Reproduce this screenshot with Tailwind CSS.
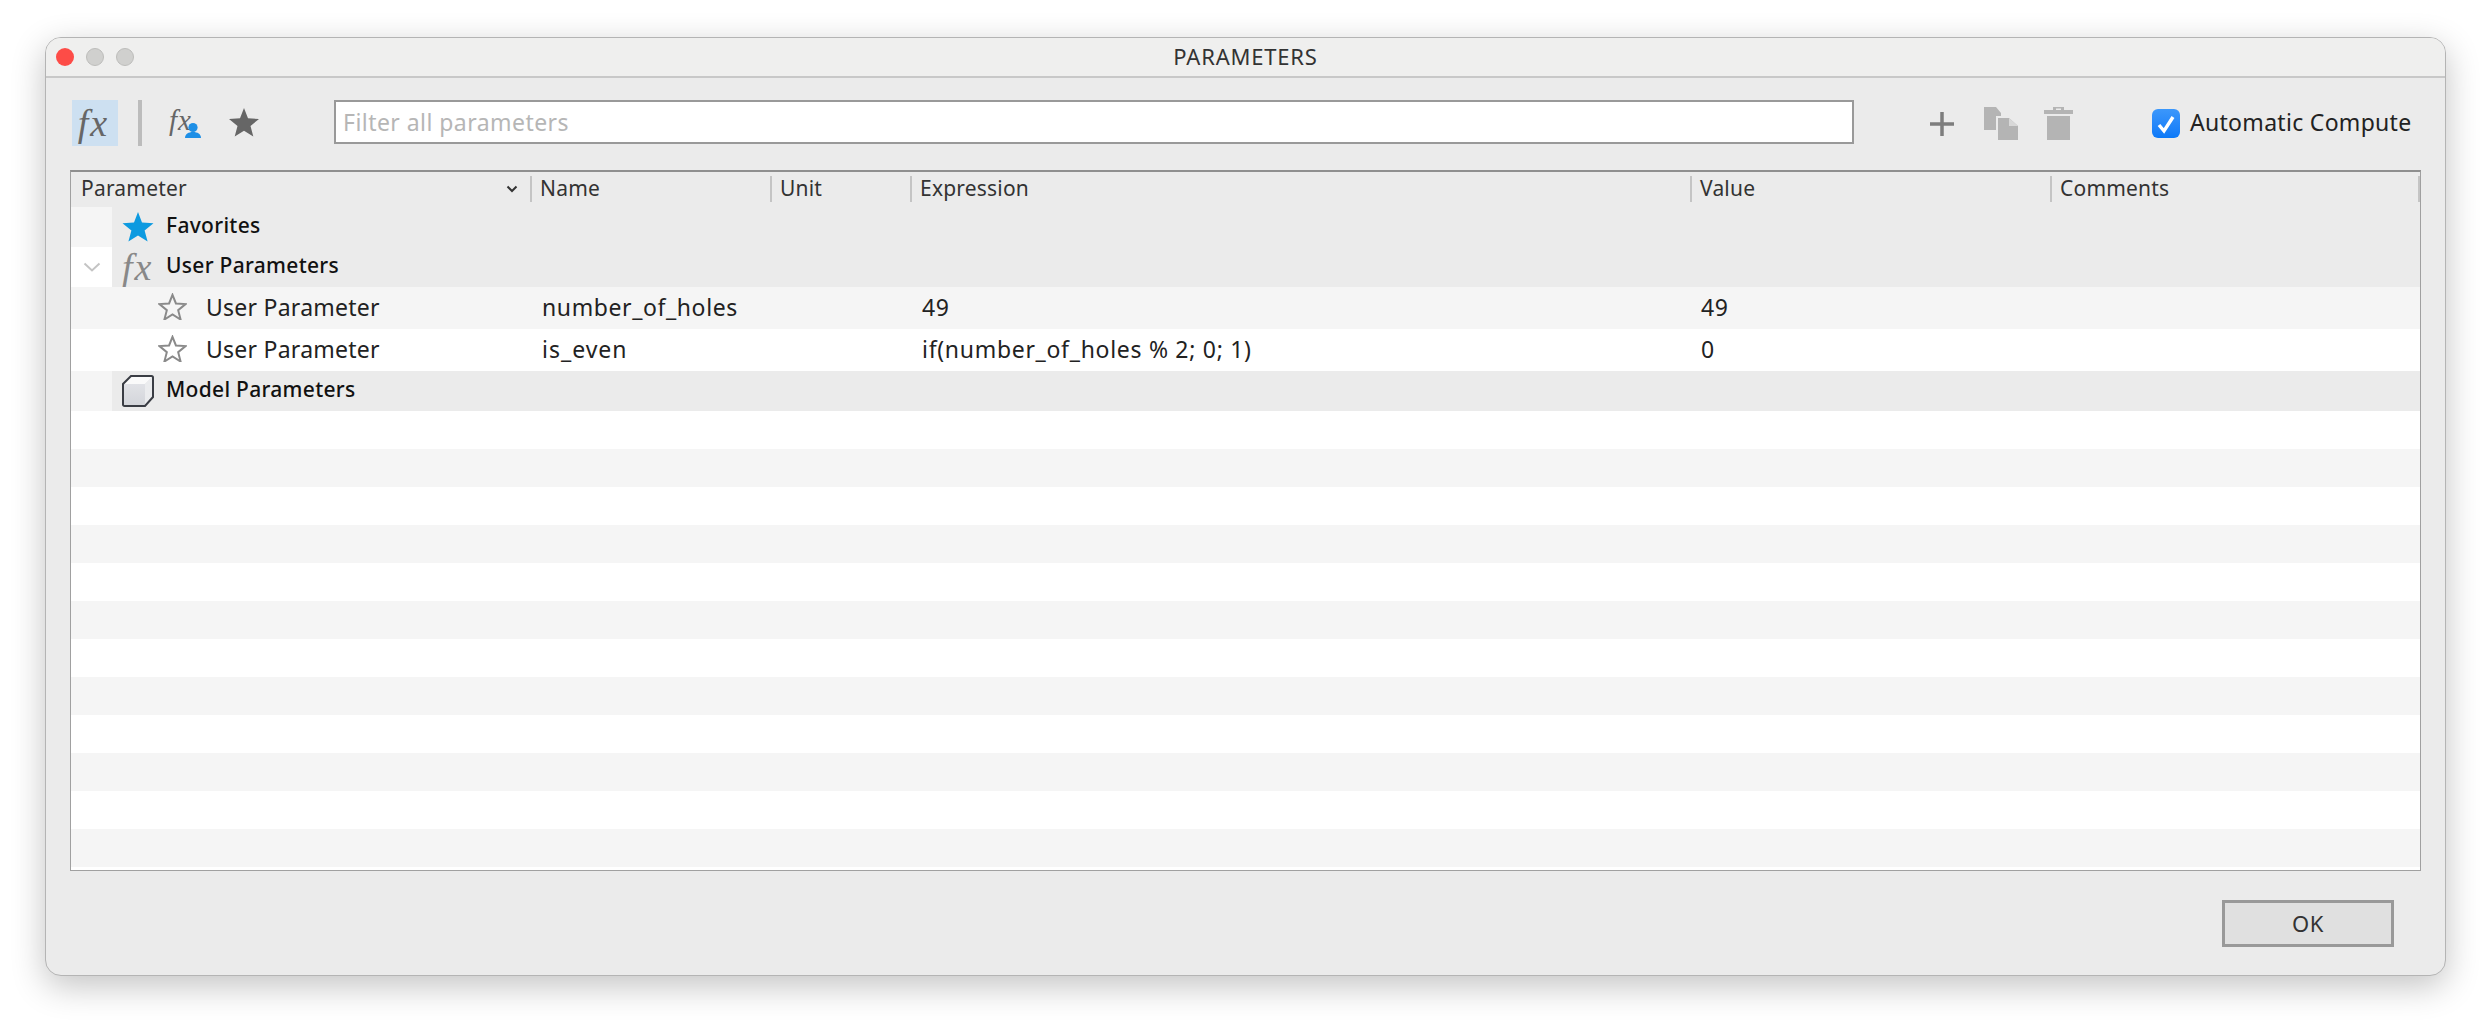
<!DOCTYPE html>
<html lang="en">
<head>
    <meta charset="UTF-8">
    <title>Parameters</title>
    <script src="https://cdn.jsdelivr.net/npm/@tailwindcss/browser@4"></script>
</head>
<body class="bg-white font-['Noto_Sans',sans-serif] text-[#222] text-[23px] overflow-hidden">
<div class="pl-[45px] pt-[37px] w-[2492px] h-[1030px]">
    <div class="w-[2401px] h-[939px] flex flex-col rounded-[16px] border border-[#b4b4b4] bg-[#ebebeb] overflow-hidden shadow-[0_10px_34px_rgba(0,0,0,0.24)]">
        <!-- title bar -->
        <div class="relative h-[40px] shrink-0 flex items-center justify-center bg-[#efefee] border-b-2 border-[#c8c8c8]">
            <div class="absolute left-[10px] top-[10px] flex gap-[12px]">
                <div class="w-[18px] h-[18px] rounded-full bg-[#fd4c47]"></div>
                <div class="w-[18px] h-[18px] rounded-full bg-[#d0d0ce] border border-[#bcbcba]"></div>
                <div class="w-[18px] h-[18px] rounded-full bg-[#d0d0ce] border border-[#bcbcba]"></div>
            </div>
            <span class="text-[22px] tracking-[0.8px] text-[#333] pb-[2px]">PARAMETERS</span>
        </div>

        <!-- toolbar -->
        <div class="h-[92px] shrink-0 flex items-start pt-[22px] pl-[26px]">
            <div class="w-[46px] h-[46px] bg-[#cde0f1] flex items-center justify-center font-['Liberation_Serif',serif] italic text-[38px] tracking-[2px] text-[#666] leading-none pr-[3px]">fx</div>
            <div class="w-[4px] h-[46px] bg-[#bcbcbc] ml-[20px]"></div>
            <div class="relative w-[36px] h-[46px] ml-[27px] font-['Liberation_Serif',serif] italic text-[29px] tracking-[1px] text-[#666] leading-none pt-[6px]">
                fx
                <svg class="absolute left-[15px] top-[22px]" width="18" height="18" viewBox="0 0 18 18"><circle cx="9" cy="5.500" r="4.600" fill="#1e8fe6"/><path d="M1 16c0-4 3.500-6 8-6s8 2 8 6z" fill="#1e8fe6"/></svg>
            </div>
            <svg class="ml-[23px] mt-[7px]" width="32" height="30" viewBox="0 0 32 30"><path d="M16 1l4 10.200 11 .8-8.500 7 2.800 10.600L16 23.800 6.700 29.600 9.500 19 1 12l11-.8z" fill="#666"/></svg>
            <div class="ml-[74px] w-[1520px] h-[44px] border-2 border-[#999] bg-white flex items-center px-[7px] text-[#b6b6b6] text-[23px] tracking-[0.45px]">Filter all parameters</div>
            <svg class="ml-[76px] mt-[12px]" width="24" height="24" viewBox="0 0 24 24"><path d="M12 0v24M0 12h24" stroke="#7d7d7d" stroke-width="3.500"/></svg>
            <svg class="ml-[30px] mt-[7px]" width="34" height="33" viewBox="0 0 34 33"><path d="M0 0h12l5 6v3H12v14H0z" fill="#b4b4b4"/><path d="M14 11h11l9 8v14H14z" fill="#b4b4b4"/><path d="M25 11l9 8h-9z" fill="#d8d8d8"/></svg>
            <svg class="ml-[26px] mt-[7px]" width="29" height="33" viewBox="0 0 29 33"><path d="M9 3V0h11v3h9v4H0V3zM12 1.500v1.500h5V1.500zM3 9h23v24H3z" fill="#b4b4b4"/></svg>
            <div class="ml-[79px] mt-[9px] w-[28px] h-[29px] rounded-[6px] bg-gradient-to-b from-[#3b97fb] to-[#0a79f8] flex items-center justify-center">
                <svg width="20" height="20" viewBox="0 0 20 20"><path d="M3 11l5 6 9-14" fill="none" stroke="#fff" stroke-width="3.400"/></svg>
            </div>
            <span class="ml-[10px] mt-[6px] text-[23px] leading-[32px] tracking-[0.3px]">Automatic Compute</span>
        </div>

        <!-- table -->
        <div class="ml-[24px] w-[2351px] h-[701px] shrink-0 border border-[#a0a0a0] border-t-2 border-t-[#8f8f8f] bg-white flex flex-col overflow-hidden">
            <div class="h-[35px] shrink-0 bg-[#ebebeb] grid grid-cols-[461px_240px_140px_780px_360px_1fr] items-center text-[21px] tracking-[0.2px] text-[#333] pb-[2px]">
                <div class="flex items-center justify-between h-[26px] pl-[10px] pr-[12px] border-r-2 border-[#c4c4c4]">
                    <span>Parameter</span>
                    <svg width="12" height="8" viewBox="0 0 12 8"><path d="M1.500 1.500L6 6l4.500-4.500" fill="none" stroke="#333" stroke-width="2"/></svg>
                </div>
                <div class="h-[26px] pl-[8px] border-r-2 border-[#c4c4c4] flex items-center">Name</div>
                <div class="h-[26px] pl-[8px] border-r-2 border-[#c4c4c4] flex items-center">Unit</div>
                <div class="h-[26px] pl-[8px] border-r-2 border-[#c4c4c4] flex items-center">Expression</div>
                <div class="h-[26px] pl-[8px] border-r-2 border-[#c4c4c4] flex items-center">Value</div>
                <div class="h-[26px] pl-[8px] border-r-2 border-[#c4c4c4] flex items-center">Comments</div>
            </div>

            <!-- Favorites -->
            <div class="h-[40px] shrink-0 flex bg-[#ebebeb]">
                <div class="w-[41px] bg-[#f5f5f5]"></div>
                <div class="w-[54px] flex items-center pl-[10px]">
                    <svg width="32" height="30" viewBox="0 0 32 30"><path d="M16 0l4 10.400 11.500.8-8.900 7.200 3 11.200L16 23.600 6.400 29.600l3-11.200L.5 11.200 12 10.400z" fill="#0d9ae0"/></svg>
                </div>
                <div class="flex items-center text-[21px] tracking-[0.3px] font-medium text-[#111] pb-[2px]">Favorites</div>
            </div>
            <!-- User Parameters -->
            <div class="h-[40px] shrink-0 flex bg-[#ebebeb]">
                <div class="w-[41px] bg-white flex items-center justify-center">
                    <svg width="18" height="10" viewBox="0 0 18 10"><path d="M1.500 1.500L9 8.500l7.500-7" fill="none" stroke="#c4c4c4" stroke-width="2"/></svg>
                </div>
                <div class="w-[54px] flex items-center pl-[10px] font-['Liberation_Serif',serif] italic text-[38px] tracking-[2px] leading-none text-[#888]">fx</div>
                <div class="flex items-center text-[21px] tracking-[0.3px] font-medium text-[#111] pb-[2px]">User Parameters</div>
            </div>
            <!-- parameters -->
            <div class="h-[42px] shrink-0 grid grid-cols-[461px_240px_140px_780px_360px_1fr] items-center bg-[#f5f5f5] tracking-[0.6px]">
                <div class="flex items-center pl-[87px] gap-[19px]">
                    <svg class="mb-[3px]" width="29" height="27" viewBox="0 0 32 30"><path d="M16 2l3.800 9.600 10.700.7-8.200 6.800 2.700 10.400L16 23.900l-9 5.600 2.700-10.400-8.200-6.800 10.700-.7z" fill="none" stroke="#8a8a8a" stroke-width="2.200"/></svg>
                    <span class="tracking-[0.25px] pb-[2px]">User Parameter</span>
                </div>
                <div class="pl-[10px] pb-[2px]">number_of_holes</div>
                <div></div>
                <div class="pl-[10px] pb-[2px]">49</div>
                <div class="pl-[9px] pb-[2px]">49</div>
                <div></div>
            </div>
            <div class="h-[42px] shrink-0 grid grid-cols-[461px_240px_140px_780px_360px_1fr] items-center bg-white tracking-[0.6px]">
                <div class="flex items-center pl-[87px] gap-[19px]">
                    <svg class="mb-[3px]" width="29" height="27" viewBox="0 0 32 30"><path d="M16 2l3.800 9.600 10.700.7-8.200 6.800 2.700 10.400L16 23.900l-9 5.600 2.700-10.400-8.200-6.800 10.700-.7z" fill="none" stroke="#8a8a8a" stroke-width="2.200"/></svg>
                    <span class="tracking-[0.25px] pb-[2px]">User Parameter</span>
                </div>
                <div class="pl-[10px] pb-[2px] tracking-[1px]">is_even</div>
                <div></div>
                <div class="pl-[10px] pb-[2px] tracking-[0.7px]">if(number_of_holes % 2; 0; 1)</div>
                <div class="pl-[9px] pb-[2px]">0</div>
                <div></div>
            </div>
            <!-- Model Parameters -->
            <div class="h-[40px] shrink-0 flex bg-[#ebebeb]">
                <div class="w-[41px] bg-[#f5f5f5]"></div>
                <div class="w-[54px] flex items-center pl-[10px]">
                    <svg width="32" height="32" viewBox="0 0 32 32">
                        <defs><linearGradient id="cubeFront" x1="0" y1="0" x2="0" y2="1"><stop offset="0" stop-color="#e6e7eb"/><stop offset="1" stop-color="#d3d5da"/></linearGradient></defs>
                        <path d="M9 1h20.500c.9 0 1.500.6 1.500 1.500V22l-8 9H2.500C1.600 31 1 30.400 1 29.500V9z" fill="url(#cubeFront)"/>
                        <path d="M1 9l8-8h22l-8 8z" fill="#fafafa"/>
                        <path d="M23 9l8-8v21l-8 9z" fill="#ebecee"/>
                        <path d="M9 1h20.500c.9 0 1.500.6 1.500 1.500V22l-8 9H2.500C1.600 31 1 30.400 1 29.500V9z" fill="none" stroke="#3a3d44" stroke-width="2"/>
                    </svg>
                </div>
                <div class="flex items-center text-[21px] tracking-[0.3px] font-medium text-[#111] pb-[2px]">Model Parameters</div>
            </div>
            <!-- empty rows -->
            <div class="h-[38px] shrink-0 bg-white"></div>
            <div class="h-[38px] shrink-0 bg-[#f5f5f5]"></div>
            <div class="h-[38px] shrink-0 bg-white"></div>
            <div class="h-[38px] shrink-0 bg-[#f5f5f5]"></div>
            <div class="h-[38px] shrink-0 bg-white"></div>
            <div class="h-[38px] shrink-0 bg-[#f5f5f5]"></div>
            <div class="h-[38px] shrink-0 bg-white"></div>
            <div class="h-[38px] shrink-0 bg-[#f5f5f5]"></div>
            <div class="h-[38px] shrink-0 bg-white"></div>
            <div class="h-[38px] shrink-0 bg-[#f5f5f5]"></div>
            <div class="h-[38px] shrink-0 bg-white"></div>
            <div class="h-[38px] shrink-0 bg-[#f5f5f5]"></div>
        </div>

        <!-- footer -->
        <div class="flex-1 flex justify-end items-start pt-[29px] pr-[51px]">
            <button class="w-[172px] h-[47px] border-[3px] border-[#999] bg-[#e0e0e0] text-[22px] tracking-[0.5px] text-[#333]">OK</button>
        </div>
    </div>
</div>
</body>
</html>
